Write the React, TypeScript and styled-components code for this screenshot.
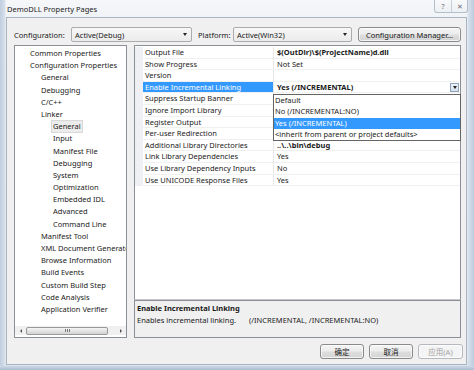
import React from "react";
import styled, { createGlobalStyle } from "styled-components";

const Global = createGlobalStyle`
  html, body { margin: 0; padding: 0; }
  body {
    width: 474px;
    height: 370px;
    overflow: hidden;
    font-family: "Noto Sans", "Noto Sans CJK SC", sans-serif;
    font-size: 7.5px;
    color: #1a1a1a;
  }
  * { box-sizing: border-box; }
`;

const Window = styled.div`
  width: 474px;
  height: 370px;
  display: flex;
  flex-direction: column;
  padding: 0 7px 5px 6px;
  background:
    linear-gradient(0deg, #a9bcd2 0, #cdd8e4 4px, rgba(255, 255, 255, 0) 5px),
    linear-gradient(90deg, #bfcddf 0, #d8e1eb 5px, rgba(255, 255, 255, 0) 6px),
    linear-gradient(270deg, #bccbdc 0, #d9e2ec 6px, rgba(255, 255, 255, 0) 7px),
    linear-gradient(180deg, #f6f7f9 0, #eff2f6 20px, #e6ebf1 100%);
`;

const TitleBar = styled.div`
  height: 17px;
  display: flex;
  justify-content: space-between;
  align-items: flex-start;
  padding-left: 1px;
`;

const Title = styled.div`
  padding-top: 4px;
  line-height: 10px;
  color: #222;
`;

const Caption = styled.div`
  display: flex;
  margin-right: -1px;
  height: 13px;
  border: 1px solid #b4bfcc;
  border-top: none;
  border-radius: 0 0 3px 3px;
  background: linear-gradient(#f8f9fb, #edf0f4);
`;

const CaptionButton = styled.div<{ $last?: boolean }>`
  width: 16px;
  display: flex;
  align-items: center;
  justify-content: center;
  color: #6a6f76;
  font-size: 7px;
  border-left: ${(p) => (p.$last ? "1px solid #c7ced8" : "none")};
`;

const Client = styled.div`
  flex: 1;
  display: flex;
  flex-direction: column;
  background: #f0f0f0;
  border: 1px solid #a9b5c3;
  padding: 9px 5px 5px 7px;
  min-height: 0;
`;

const ConfigRow = styled.div`
  display: flex;
  align-items: center;
  height: 15px;
  margin-bottom: 3px;
`;

const FieldLabel = styled.div<{ $width: number; $gap?: number }>`
  width: ${(p) => p.$width}px;
  margin-left: ${(p) => p.$gap ?? 0}px;
  white-space: nowrap;
`;

const Combo = styled.div<{ $width: number }>`
  width: ${(p) => p.$width}px;
  height: 15px;
  display: flex;
  align-items: center;
  padding: 0 4px 0 3px;
  border: 1px solid #acacac;
  border-radius: 2px;
  background: linear-gradient(#f7f7f7, #ebebeb);
  white-space: nowrap;
`;

const ComboText = styled.span`
  flex: 1;
`;

const Arrow = styled.span`
  width: 0;
  height: 0;
  border-left: 2.5px solid transparent;
  border-right: 2.5px solid transparent;
  border-top: 3px solid #222;
`;

const PushButton = styled.div<{ $width: number; $gap?: number; $disabled?: boolean }>`
  width: ${(p) => p.$width}px;
  margin-left: ${(p) => p.$gap ?? 0}px;
  height: 15px;
  display: flex;
  align-items: center;
  justify-content: center;
  white-space: nowrap;
  border: 1px solid ${(p) => (p.$disabled ? "#b5b9bd" : "#8a8a8a")};
  border-radius: 3px;
  color: ${(p) => (p.$disabled ? "#a3a3a3" : "#1a1a1a")};
  background: ${(p) =>
    p.$disabled
      ? "#f4f4f4"
      : "linear-gradient(#f4f4f4 0%, #ececec 48%, #dedede 52%, #d4d4d4 100%)"};
  box-shadow: inset 0 0 0 1px rgba(255, 255, 255, 0.7);
`;

const Main = styled.div`
  flex: 1;
  min-height: 0;
  display: flex;
  gap: 7px;
`;

const Tree = styled.div`
  width: 113px;
  display: flex;
  flex-direction: column;
  background: #fff;
  border: 1px solid #8b9097;
  overflow: hidden;
`;

const TreeList = styled.div`
  flex: 1;
  padding-top: 1px;
`;

const TreeItem = styled.div<{ $level: number }>`
  height: 12.2px;
  line-height: 12.2px;
  padding-left: ${(p) => (p.$level === 1 ? 15 : p.$level === 2 ? 26 : 38)}px;
  white-space: nowrap;
`;

const TreeLabel = styled.span<{ $selected?: boolean }>`
  padding: 0 1px 1px;
  margin-left: -2px;
  border: 1px solid ${(p) => (p.$selected ? "#d9d9d9" : "transparent")};
  background: ${(p) => (p.$selected ? "#ececec" : "transparent")};
`;

const HScroll = styled.div`
  height: 9px;
  margin: 0 0 2px 0;
  display: flex;
  align-items: center;
  background: #f0f0f0;
`;

const ScrollArrow = styled.div<{ $dir: "left" | "right" }>`
  width: 11px;
  height: 9px;
  display: flex;
  align-items: center;
  justify-content: center;
  &::after {
    content: "";
    border-top: 2px solid transparent;
    border-bottom: 2px solid transparent;
    ${(p) =>
      p.$dir === "left"
        ? "border-right: 2px solid #555;"
        : "border-left: 2px solid #555;"}
  }
`;

const Track = styled.div`
  flex: 1;
  height: 9px;
  display: flex;
  align-items: center;
`;

const Thumb = styled.div`
  width: 82px;
  height: 8px;
  border: 1px solid #999;
  border-radius: 2px;
  background: linear-gradient(#f5f5f5, #e2e2e2 50%, #d4d4d4);
  display: flex;
  align-items: center;
  justify-content: center;
`;

const Grip = styled.span`
  width: 5px;
  height: 3px;
  background: repeating-linear-gradient(90deg, #7a7a7a 0 1px, transparent 1px 2px);
`;

const RightPane = styled.div`
  flex: 1;
  display: flex;
  flex-direction: column;
`;

const Grid = styled.div`
  flex: 1;
  position: relative;
  background: #fff;
  border: 1px solid #8b9097;
  border-bottom-color: #c9c9c9;
  padding-top: 1px;
`;

const Row = styled.div`
  display: grid;
  grid-template-columns: 8px 130px 1fr;
  height: 11.6px;
  line-height: 10.6px;
`;

const Gutter = styled.div`
  background: #eef0f3;
`;

const NameCell = styled.div<{ $selected?: boolean }>`
  padding-left: 2px;
  white-space: nowrap;
  overflow: hidden;
  border-bottom: 1px solid #f0f0f0;
  background: ${(p) => (p.$selected ? "#3399ff" : "transparent")};
  color: ${(p) => (p.$selected ? "#fff" : "inherit")};
`;

const ValueCell = styled.div<{ $bold?: boolean }>`
  display: flex;
  align-items: center;
  padding-left: 3px;
  white-space: nowrap;
  overflow: hidden;
  border-left: 1px solid #e8e8e8;
  border-bottom: 1px solid #f0f0f0;
  font-weight: ${(p) => (p.$bold ? 700 : 400)};
`;

const ValueText = styled.span`
  flex: 1;
`;

const DropButton = styled.span`
  width: 9px;
  height: 9px;
  margin-right: 1px;
  display: flex;
  align-items: center;
  justify-content: center;
  border: 1px solid #8fa3ba;
  background: linear-gradient(#eef3f9, #d5dfea);
`;

const DropList = styled.div`
  position: absolute;
  left: 138px;
  right: -1px;
  top: 48px;
  z-index: 2;
  background: #fff;
  border: 1px solid #646464;
`;

const DropItem = styled.div<{ $active?: boolean }>`
  height: 11.3px;
  line-height: 11.3px;
  padding-left: 1px;
  white-space: nowrap;
  background: ${(p) => (p.$active ? "#3399ff" : "transparent")};
  color: ${(p) => (p.$active ? "#fff" : "inherit")};
`;

const Description = styled.div`
  height: 38px;
  padding: 2px 2px;
  background: #f0f0f0;
  border: 1px solid #8b9097;
  line-height: 11.5px;
`;

const DescTitle = styled.div`
  font-weight: 700;
`;

const DescLine = styled.div`
  display: flex;
  white-space: nowrap;
`;

const DescLead = styled.span`
  width: 112px;
`;

const ButtonRow = styled.div`
  height: 15px;
  margin-top: 6px;
  margin-right: -2px;
  display: flex;
  justify-content: flex-end;
`;

type Prop = { name: string; value: string; bold?: boolean; selected?: boolean };

const props: Prop[] = [
  { name: "Output File", value: "$(OutDir)\\$(ProjectName)d.dll", bold: true },
  { name: "Show Progress", value: "Not Set" },
  { name: "Version", value: "" },
  { name: "Enable Incremental Linking", value: "Yes (/INCREMENTAL)", bold: true, selected: true },
  { name: "Suppress Startup Banner", value: "" },
  { name: "Ignore Import Library", value: "" },
  { name: "Register Output", value: "" },
  { name: "Per-user Redirection", value: "" },
  { name: "Additional Library Directories", value: "..\\..\\bin\\debug", bold: true },
  { name: "Link Library Dependencies", value: "Yes" },
  { name: "Use Library Dependency Inputs", value: "No" },
  { name: "Use UNICODE Response Files", value: "Yes" },
];

const tree: { label: string; level: number; selected?: boolean }[] = [
  { label: "Common Properties", level: 1 },
  { label: "Configuration Properties", level: 1 },
  { label: "General", level: 2 },
  { label: "Debugging", level: 2 },
  { label: "C/C++", level: 2 },
  { label: "Linker", level: 2 },
  { label: "General", level: 3, selected: true },
  { label: "Input", level: 3 },
  { label: "Manifest File", level: 3 },
  { label: "Debugging", level: 3 },
  { label: "System", level: 3 },
  { label: "Optimization", level: 3 },
  { label: "Embedded IDL", level: 3 },
  { label: "Advanced", level: 3 },
  { label: "Command Line", level: 3 },
  { label: "Manifest Tool", level: 2 },
  { label: "XML Document Generator", level: 2 },
  { label: "Browse Information", level: 2 },
  { label: "Build Events", level: 2 },
  { label: "Custom Build Step", level: 2 },
  { label: "Code Analysis", level: 2 },
  { label: "Application Verifier", level: 2 },
];

const options = [
  "Default",
  "No (/INCREMENTAL:NO)",
  "Yes (/INCREMENTAL)",
  "<inherit from parent or project defaults>",
];

export default function App() {
  return (
    <>
      <Global />
      <Window>
        <TitleBar>
          <Title>DemoDLL Property Pages</Title>
          <Caption>
            <CaptionButton>?</CaptionButton>
            <CaptionButton $last>✕</CaptionButton>
          </Caption>
        </TitleBar>
        <Client>
          <ConfigRow>
            <FieldLabel $width={57}>Configuration:</FieldLabel>
            <Combo $width={121}>
              <ComboText>Active(Debug)</ComboText>
              <Arrow />
            </Combo>
            <FieldLabel $width={35} $gap={6}>
              Platform:
            </FieldLabel>
            <Combo $width={119}>
              <ComboText>Active(Win32)</ComboText>
              <Arrow />
            </Combo>
            <PushButton $width={103} $gap={6}>
              Configuration Manager...
            </PushButton>
          </ConfigRow>
          <Main>
            <Tree>
              <TreeList>
                {tree.map((t, i) => (
                  <TreeItem key={i} $level={t.level}>
                    <TreeLabel $selected={t.selected}>{t.label}</TreeLabel>
                  </TreeItem>
                ))}
              </TreeList>
              <HScroll>
                <ScrollArrow $dir="left" />
                <Track>
                  <Thumb>
                    <Grip />
                  </Thumb>
                </Track>
                <ScrollArrow $dir="right" />
              </HScroll>
            </Tree>
            <RightPane>
              <Grid>
                {props.map((p, i) => (
                  <Row key={i}>
                    <Gutter />
                    <NameCell $selected={p.selected}>{p.name}</NameCell>
                    <ValueCell $bold={p.bold}>
                      <ValueText>{p.value}</ValueText>
                      {p.selected && (
                        <DropButton>
                          <Arrow />
                        </DropButton>
                      )}
                    </ValueCell>
                  </Row>
                ))}
                <DropList>
                  {options.map((o, i) => (
                    <DropItem key={i} $active={i === 2}>
                      {o}
                    </DropItem>
                  ))}
                </DropList>
              </Grid>
              <Description>
                <DescTitle>Enable Incremental Linking</DescTitle>
                <DescLine>
                  <DescLead>Enables incremental linking.</DescLead>
                  <span>(/INCREMENTAL, /INCREMENTAL:NO)</span>
                </DescLine>
              </Description>
            </RightPane>
          </Main>
          <ButtonRow>
            <PushButton $width={44}>确定</PushButton>
            <PushButton $width={44} $gap={5}>
              取消
            </PushButton>
            <PushButton $width={45} $gap={5} $disabled>
              应用(A)
            </PushButton>
          </ButtonRow>
        </Client>
      </Window>
    </>
  );
}
